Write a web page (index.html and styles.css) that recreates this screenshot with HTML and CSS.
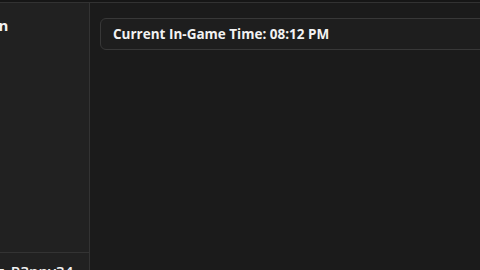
FILE: index.html
```html
<!DOCTYPE html>
<html>
<head>
<meta charset="utf-8">
<link rel="stylesheet" href="styles.css">
</head>
<body>
<div class="topbar"></div>
<div class="app">
  <aside class="sidebar">
    <div class="side-head">Staff Admin</div>
    <div class="side-foot">Logged in as Dz_R3nny34</div>
  </aside>
  <main class="main">
    <div class="card">Current In-Game Time: 08:12 PM</div>
  </main>
</div>
</body>
</html>
```
FILE: styles.css
```css
html, body {
  margin: 0;
  padding: 0;
  width: 480px;
  height: 270px;
  overflow: hidden;
  background: #1b1b1b;
  font-family: "Open Sans", "Liberation Sans", sans-serif;
  color: #f2f2f2;
}
.topbar {
  height: 2px;
  background: #161616;
  border-bottom: 1px solid #323232;
}
.app {
  display: flex;
  width: 800px;
  margin-left: -110px;
}
.sidebar {
  width: 199px;
  flex: none;
  height: 297px;
  background: #212121;
  border-right: 1px solid #333333;
  display: flex;
  flex-direction: column;
  justify-content: space-between;
}
.side-head {
  padding: 12px 16px 12px 30px;
  font-size: 15px;
  line-height: 20px;
  font-weight: 700;
  white-space: nowrap;
}
.side-foot {
  border-top: 1px solid #333333;
  height: 48px;
  box-sizing: border-box;
  padding: 8px 3px;
  font-size: 15px;
  line-height: 20px;
  font-weight: 600;
  white-space: nowrap;
}
.main {
  flex: 1;
  padding: 15px 10px;
}
.card {
  background: #1e1e1e;
  border: 1px solid #383838;
  border-radius: 6px;
  height: 32px;
  box-sizing: border-box;
  padding: 0 12px;
  display: flex;
  align-items: center;
  font-size: 13.5px;
  font-weight: 700;
  white-space: nowrap;
}
```
